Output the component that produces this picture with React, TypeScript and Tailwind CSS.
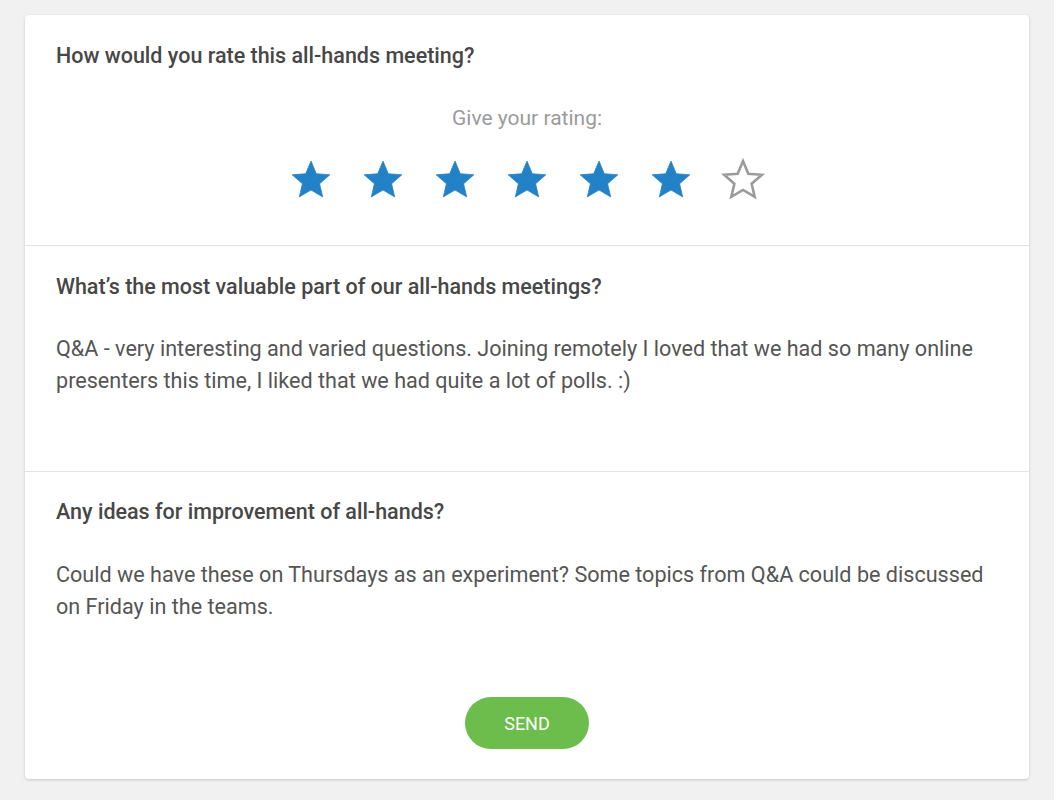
import React from "react";

const Star = ({ filled }: { filled: boolean }) => (
  <svg width="44" height="44" viewBox="0 0 24 24" className="block">
    <polygon
      points="12,2.2 14.9,9.1 22.3,9.7 16.7,14.6 18.4,21.8 12,18 5.6,21.8 7.3,14.6 1.7,9.7 9.1,9.1"
      fill={filled ? "#2381c8" : "none"}
      stroke={filled ? "#2381c8" : "#9a9a9a"}
      strokeWidth={filled ? 0.4 : 1.4}
      strokeLinejoin="miter"
    />
  </svg>
);

export default function App() {
  const rating = 6;
  return (
    <div
      className="min-h-screen bg-[#f1f1f1] pt-[15px] pl-[25px] pr-[25px]"
      style={{ fontFamily: "Roboto, 'Noto Sans', sans-serif" }}
    >
      <div className="h-[764px] rounded-[4px] bg-white shadow-[0_1px_3px_rgba(0,0,0,0.18)] flex flex-col">
        {/* Rating */}
        <div className="px-[31px] pt-[28px] pb-[44px] border-b border-[#e3e3e3]">
          <h2 className="text-[21.5px] leading-[26px] font-medium text-[#474747]">
            How would you rate this all-hands meeting?
          </h2>
          <p className="mt-[37px] text-center text-[21px] leading-[24px] text-[#9b9b9b]">
            Give your rating:
          </p>
          <div className="mt-[27px] flex justify-center gap-[28px] h-[44px] items-center">
            {[1, 2, 3, 4, 5, 6, 7].map((n) => (
              <Star key={n} filled={n <= rating} />
            ))}
          </div>
        </div>

        {/* Valuable part */}
        <div className="px-[31px] pt-[28px] pb-[74px] border-b border-[#e3e3e3]">
          <h2 className="text-[21.5px] leading-[26px] font-medium text-[#474747]">
            What’s the most valuable part of our all-hands meetings?
          </h2>
          <p className="mt-[33px] text-[21.6px] leading-[32px] text-[#555555]">
            Q&amp;A - very interesting and varied questions. Joining remotely I loved that we had so many online
            presenters this time, I liked that we had quite a lot of polls. :)
          </p>
        </div>

        {/* Improvement */}
        <div className="px-[31px] pt-[27px] pb-[30px] flex-1 flex flex-col">
          <h2 className="text-[21.5px] leading-[26px] font-medium text-[#474747]">
            Any ideas for improvement of all-hands?
          </h2>
          <p className="mt-[34px] text-[21.6px] leading-[32px] text-[#555555]">
            Could we have these on Thursdays as an experiment? Some topics from Q&amp;A could be discussed
            on Friday in the teams.
          </p>
          <div className="mt-auto flex justify-center">
            <button className="w-[124px] h-[52px] rounded-full bg-[#6cbd4b] text-white text-[18px]">
              SEND
            </button>
          </div>
        </div>
      </div>
    </div>
  );
}
